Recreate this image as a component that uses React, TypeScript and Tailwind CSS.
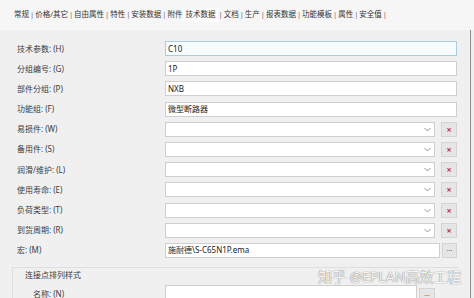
const tabs = [
  "常规",
  "价格/其它",
  "自由属性",
  "特性",
  "安装数据",
  "附件",
  "技术数据",
  "文档",
  "生产",
  "报表数据",
  "功能模板",
  "属性",
  "安全值",
];

type Field = { label: string; kind: "text" | "select" | "macro"; value?: string };

const fields: Field[] = [
  { label: "技术参数: (H)", kind: "text", value: "C10" },
  { label: "分组编号: (G)", kind: "text", value: "1P" },
  { label: "部件分组: (P)", kind: "text", value: "NXB" },
  { label: "功能组: (F)", kind: "text", value: "微型断路器" },
  { label: "易损件: (W)", kind: "select" },
  { label: "备用件: (S)", kind: "select" },
  { label: "润滑/维护: (L)", kind: "select" },
  { label: "使用寿命: (E)", kind: "select" },
  { label: "负荷类型: (T)", kind: "select" },
  { label: "到货周期: (R)", kind: "select" },
  { label: "宏: (M)", kind: "macro", value: "施耐德\\S-C65N1P.ema" },
];

function TabBar() {
  return (
    <div className="flex h-[30px] items-center bg-[#f6f6f6] pl-[14px] text-[7.5px] leading-none text-[#333]">
      {tabs.map((t) =>
        t === "技术数据" ? (
          <span key={t} className="flex items-center">
            <span className="flex h-[14px] items-center bg-[#fbfbfb] px-[3px]">{t}</span>
            <span className="mr-[1px] text-[#666]">|</span>
          </span>
        ) : (
          <span key={t} className="flex items-center">
            <span>{t}</span>
            {t !== "附件" && <span className="mx-[1px] text-[#666]">|</span>}
          </span>
        )
      )}
    </div>
  );
}

function ClearButton() {
  return (
    <button className="ml-[6px] flex h-[15px] w-[16px] shrink-0 items-center justify-center border border-[#d4d4d4] bg-[#e6e6e6] text-[9px] font-bold leading-none text-[#c0392b]">
      ×
    </button>
  );
}

function DotsButton() {
  return (
    <button className="ml-[2px] flex h-[15px] w-[15px] shrink-0 items-center justify-center border border-[#d4d4d4] bg-[#e6e6e6] pb-[3px] text-[7px] leading-none text-[#666]">
      ...
    </button>
  );
}

function FieldRow({ field, focused }: { field: Field; focused: boolean }) {
  return (
    <div className="flex h-[15px] items-center">
      <span className="w-[148px] shrink-0 text-[8px] text-[#3c3c3c]">{field.label}</span>
      {field.kind === "text" && (
        <div
          className={
            focused
              ? "flex h-full w-[292px] items-center border border-[#a9cde2] bg-[#f7fcff] px-[2px] text-[8px] text-[#222]"
              : "flex h-full w-[292px] items-center border border-[#cfcfcf] bg-white px-[2px] text-[8px] text-[#222]"
          }
        >
          {field.value}
        </div>
      )}
      {field.kind === "select" && (
        <div className="flex w-[292px] items-center">
          <div className="flex h-[15px] flex-1 items-center justify-end border border-[#cfcfcf] bg-white pr-[3px]">
            <svg width="7" height="5" viewBox="0 0 7 5">
              <path d="M0.5 1 L3.5 4 L6.5 1" fill="none" stroke="#8a8a8a" strokeWidth="0.9" />
            </svg>
          </div>
          <ClearButton />
        </div>
      )}
      {field.kind === "macro" && (
        <div className="flex w-[292px] items-center">
          <div className="flex h-[15px] flex-1 items-center border border-[#cfcfcf] bg-white px-[2px] text-[8px] text-[#222]">
            {field.value}
          </div>
          <DotsButton />
        </div>
      )}
    </div>
  );
}

export default function App() {
  return (
    <div className="relative h-[298px] w-[474px] overflow-hidden bg-[#f0f0f0] font-['Noto_Sans','Noto_Sans_CJK_SC',sans-serif]">
      <TabBar />
      <div className="flex h-[268px] w-[471px] flex-col border-r border-[#8e8e8e] pt-[11px]">
        <div className="flex flex-col gap-[5.2px] pl-[17px]">
          {fields.map((f, i) => (
            <FieldRow key={f.label} field={f} focused={i === 0} />
          ))}
        </div>
        <div className="mx-[12px] mt-[9px] flex flex-1 flex-col border-l border-t border-[#dedede] pl-[12px] pt-[1px]">
          <span className="text-[8px] leading-[12px] text-[#3c3c3c]">连接点排列样式</span>
          <div className="mt-[4px] flex items-start">
            <span className="mt-[3px] w-[140px] shrink-0 pl-[8px] text-[8px] leading-[12px] text-[#3c3c3c]">名称: (N)</span>
            <div className="h-[20px] w-[252px] border border-[#cfcfcf] bg-white" />
            <button className="ml-[2px] mt-[3px] flex h-[15px] w-[16px] items-center justify-center border border-[#d4d4d4] bg-[#e6e6e6] pb-[3px] text-[7px] leading-none text-[#666]">
              ...
            </button>
          </div>
        </div>
      </div>
      <div className="absolute left-[318px] top-[270px] text-[14px] leading-none text-[#f4f4f4] [text-shadow:0_0_1px_#8a8a8a,0_0_1px_#8a8a8a]">
        知乎 @EPLAN高效工程
      </div>
    </div>
  );
}
